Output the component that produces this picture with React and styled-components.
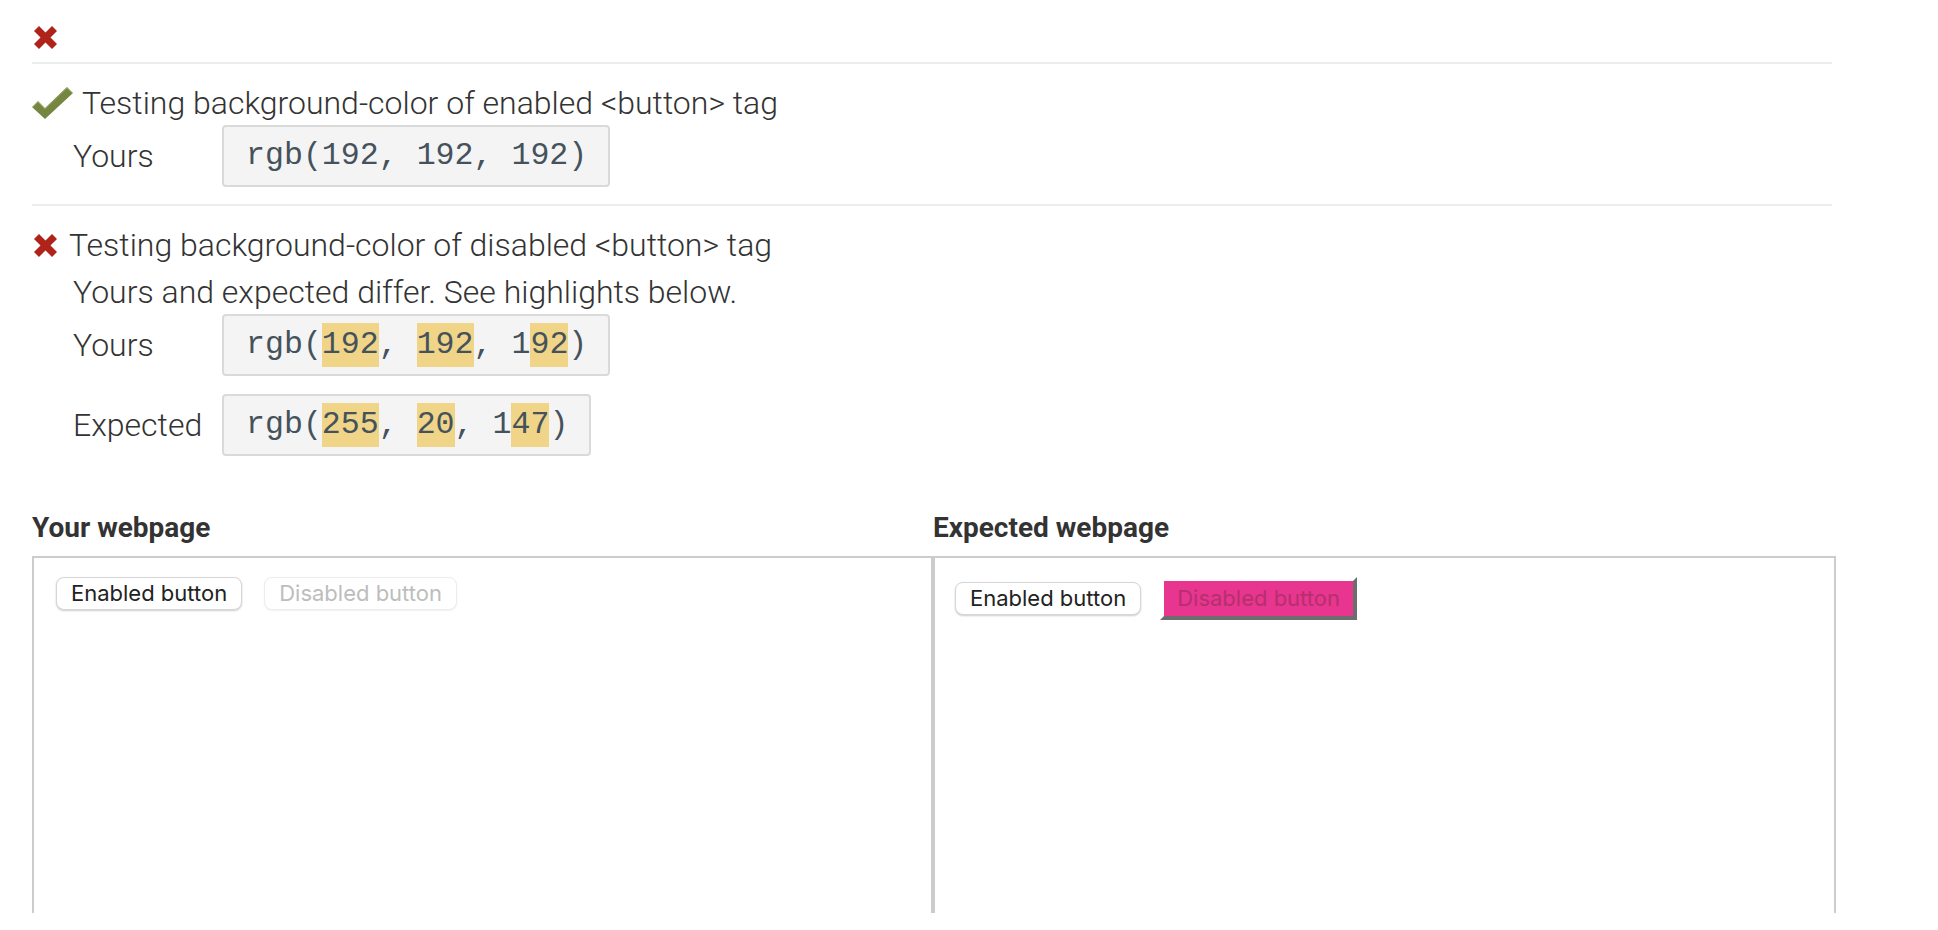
import React from "react";
import styled, { createGlobalStyle } from "styled-components";

const GlobalStyle = createGlobalStyle`
  body {
    margin: 0;
    background: #fff;
    font-family: Roboto, "Liberation Sans", sans-serif;
    color: #333;
  }
`;

const Page = styled.div`
  padding-left: 32px;
  width: 1804px;
`;

const Report = styled.div`
  width: 1800px;
`;

const Summary = styled.div`
  display: flex;
  padding: 25px 0 12px 1px;
`;

const Divider = styled.div`
  border-top: 2px solid #ececec;
`;

const Test = styled.div`
  padding: 21px 0 17px;
`;

const TestHeader = styled.div`
  display: flex;
  align-items: center;
  gap: ${(p) => (p.pass ? "9px" : "10px")};
  height: 36px;
  padding-left: ${(p) => (p.pass ? "0" : "1px")};
  font-size: 32px;
  line-height: 36px;
  font-weight: 300;
`;

const Message = styled.div`
  margin: 11px 0 3px 41px;
  font-size: 32px;
  line-height: 36px;
  font-weight: 300;
`;

const CompareList = styled.div`
  display: grid;
  grid-template-columns: 149px auto;
  row-gap: 18px;
  align-items: center;
  justify-items: start;
  margin-top: 4px;
  padding-left: 41px;
`;

const Label = styled.div`
  font-size: 32px;
  line-height: 36px;
  font-weight: 300;
`;

const CodeBox = styled.code`
  display: inline-block;
  padding: 7px 21px 7px 22px;
  border: 2px solid #dadada;
  border-radius: 4px;
  background: #f4f4f4;
  font-family: "Liberation Mono", "DejaVu Sans Mono", monospace;
  font-size: 31.6px;
  line-height: 44px;
  color: #45525c;
  white-space: pre;
`;

const Mark = styled.span`
  display: inline-block;
  background: #f0d588;
  line-height: 44px;
  vertical-align: top;
`;

const Previews = styled.div`
  display: grid;
  grid-template-columns: 901px 903px;
  margin-top: 39px;
`;

const PreviewTitle = styled.h3`
  margin: 0 0 12px;
  font-size: 28px;
  line-height: 32px;
  font-weight: 700;
  color: #333;
`;

const Frame = styled.div`
  box-sizing: border-box;
  height: 357px;
  border: 2px solid #cccccc;
  border-bottom: none;
  padding: ${(p) => (p.expected ? "19px 20px 0 20px" : "19px 20px 0 22px")};
`;

const NativeButton = styled.button`
  box-sizing: border-box;
  height: 33px;
  margin-right: ${(p) => (p.tight ? "19px" : "22px")};
  padding: 0 14px;
  border: 1px solid ${(p) => (p.disabled ? "#ececec" : "#d6d6d6")};
  border-radius: 8px;
  background: #fff;
  box-shadow: ${(p) =>
    p.disabled ? "0 1px 2px rgba(0,0,0,0.06)" : "0 1px 2px rgba(0,0,0,0.2)"};
  font-family: Inter, "Liberation Sans", sans-serif;
  font-size: 22px;
  line-height: 31px;
  color: ${(p) => (p.disabled ? "#bdbdbd" : "#222")};
  vertical-align: baseline;
`;

const PinkButton = styled.button`
  box-sizing: border-box;
  height: 43px;
  padding: 0 13px;
  border: 4px solid;
  border-color: #fff #6d6d6d #6d6d6d #fff;
  border-radius: 0;
  background: #e8358f;
  font-family: Inter, "Liberation Sans", sans-serif;
  font-size: 22px;
  line-height: 35px;
  color: #b4306e;
  vertical-align: baseline;
`;

function CrossIcon() {
  return (
    <svg width="26" height="25" viewBox="0 0 26 25" aria-hidden="true">
      <g stroke="#b0231a" strokeWidth="7" strokeLinecap="butt">
        <line x1="3.5" y1="3.5" x2="21.5" y2="21.5" />
        <line x1="21.5" y1="3.5" x2="3.5" y2="21.5" />
      </g>
    </svg>
  );
}

function CheckIcon() {
  return (
    <svg width="41" height="32" viewBox="0 0 41 32" aria-hidden="true">
      <polygon points="0,20 6,14 13,21 35,0 41,6 13,32" fill="#74863f" />
      <polyline points="1,20 6,15 13,22 35,1 40,6" fill="none" stroke="#93a35f" strokeWidth="1" />
    </svg>
  );
}

function Code({ parts }) {
  return (
    <CodeBox>
      {parts.map((part, i) =>
        part.mark ? <Mark key={i}>{part.text}</Mark> : <span key={i}>{part.text}</span>
      )}
    </CodeBox>
  );
}

const yoursDisabled = [
  { text: "rgb(" },
  { text: "192", mark: true },
  { text: ", " },
  { text: "192", mark: true },
  { text: ", 1" },
  { text: "92", mark: true },
  { text: ")" },
];

const expectedDisabled = [
  { text: "rgb(" },
  { text: "255", mark: true },
  { text: ", " },
  { text: "20", mark: true },
  { text: ", 1" },
  { text: "47", mark: true },
  { text: ")" },
];

export default function App() {
  return (
    <>
      <GlobalStyle />
      <Page>
        <Report>
          <Summary>
            <CrossIcon />
          </Summary>
          <Divider />

          <Test>
            <TestHeader pass>
              <CheckIcon />
              <span>Testing background-color of enabled &lt;button&gt; tag</span>
            </TestHeader>
            <CompareList>
              <Label>Yours</Label>
              <Code parts={[{ text: "rgb(192, 192, 192)" }]} />
            </CompareList>
          </Test>
          <Divider />

          <Test>
            <TestHeader>
              <CrossIcon />
              <span>Testing background-color of disabled &lt;button&gt; tag</span>
            </TestHeader>
            <Message>Yours and expected differ. See highlights below.</Message>
            <CompareList>
              <Label>Yours</Label>
              <Code parts={yoursDisabled} />
              <Label>Expected</Label>
              <Code parts={expectedDisabled} />
            </CompareList>
          </Test>
        </Report>

        <Previews>
          <div>
            <PreviewTitle>Your webpage</PreviewTitle>
            <Frame>
              <NativeButton>Enabled button</NativeButton>
              <NativeButton disabled>Disabled button</NativeButton>
            </Frame>
          </div>
          <div>
            <PreviewTitle>Expected webpage</PreviewTitle>
            <Frame expected>
              <NativeButton tight>Enabled button</NativeButton>
              <PinkButton disabled>Disabled button</PinkButton>
            </Frame>
          </div>
        </Previews>
      </Page>
    </>
  );
}
